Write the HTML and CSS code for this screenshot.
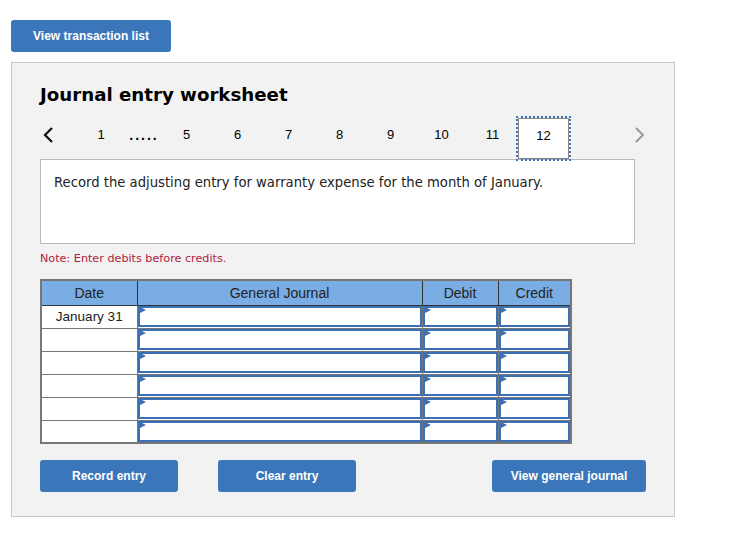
FILE: index.html
```html
<!DOCTYPE html>
<html>
  <head>
    <meta charset="utf-8">
    <title>Journal entry worksheet</title>
    <link rel="stylesheet" href="styles.css">
  </head>
  <body>
    <button class='btn top-btn'>View transaction list</button>

    <div id='panel'>
      <h1 class='title'>Journal entry worksheet</h1>

      <div id='pager'>
        <span class='arrow prev'>
          <svg width='12' height='18' viewBox='0 0 12 18'><path d='M10 2 L3 9 L10 16' fill='none' stroke='#111' stroke-width='2.2'/></svg>
        </span>
        <span class='page first'>1</span>
        <span class='dots'>.....</span>
        <span class='page'>5</span>
        <span class='page'>6</span>
        <span class='page'>7</span>
        <span class='page'>8</span>
        <span class='page'>9</span>
        <span class='page'>10</span>
        <span class='page'>11</span>
        <span class='page current'>12</span>
        <span class='arrow next'>
          <svg width='12' height='18' viewBox='0 0 12 18'><path d='M2 2 L9 9 L2 16' fill='none' stroke='#999' stroke-width='2'/></svg>
        </span>
      </div>

      <div class='question'>
        Record the adjusting entry for warranty expense for the month of January.
      </div>

      <p class='note'>Note: Enter debits before credits.</p>

      <table class='journal'>
        <tr>
          <th class='col-date'>Date</th>
          <th class='col-account'>General Journal</th>
          <th class='col-debit'>Debit</th>
          <th class='col-credit'>Credit</th>
        </tr>
        <tr>
          <td class='date'>January 31</td>
          <td class='entry'><div class='field'></div></td>
          <td class='entry'><div class='field'></div></td>
          <td class='entry'><div class='field'></div></td>
        </tr>
        <tr>
          <td class='date'></td>
          <td class='entry'><div class='field'></div></td>
          <td class='entry'><div class='field'></div></td>
          <td class='entry'><div class='field'></div></td>
        </tr>
        <tr>
          <td class='date'></td>
          <td class='entry'><div class='field'></div></td>
          <td class='entry'><div class='field'></div></td>
          <td class='entry'><div class='field'></div></td>
        </tr>
        <tr>
          <td class='date'></td>
          <td class='entry'><div class='field'></div></td>
          <td class='entry'><div class='field'></div></td>
          <td class='entry'><div class='field'></div></td>
        </tr>
        <tr>
          <td class='date'></td>
          <td class='entry'><div class='field'></div></td>
          <td class='entry'><div class='field'></div></td>
          <td class='entry'><div class='field'></div></td>
        </tr>
        <tr>
          <td class='date'></td>
          <td class='entry'><div class='field'></div></td>
          <td class='entry'><div class='field'></div></td>
          <td class='entry'><div class='field'></div></td>
        </tr>
      </table>

      <div class='actions'>
        <button class='btn'>Record entry</button>
        <button class='btn clear'>Clear entry</button>
        <button class='btn wide'>View general journal</button>
      </div>
    </div>
  </body>
</html>
```

FILE: styles.css
```css
* {
  margin: 0;
  padding: 0;
  box-sizing: border-box;
}
body {
  padding: 20px 0 0 11px;
  background-color: white;
  font-family: 'Liberation Sans', Arial, sans-serif;
  color: #222;
}
.btn {
  display: block;
  height: 32px;
  width: 138px;
  border: none;
  border-radius: 3px;
  background-color: #3b76bb;
  color: white;
  font-family: 'Liberation Sans', Arial, sans-serif;
  font-weight: bold;
  font-size: 12px;
}
.top-btn {
  width: 160px;
}
#panel {
  margin-top: 10px;
  width: 664px;
  height: 455px;
  padding: 21px 0 0 28px;
  background-color: #f2f2f2;
  border: 1px solid #c8c8c8;
}
.title {
  font-family: 'DejaVu Sans', Verdana, sans-serif;
  font-size: 18.2px;
  font-weight: bold;
  color: black;
  line-height: 22px;
}
#pager {
  display: flex;
  align-items: center;
  height: 43px;
  margin-top: 10px;
  font-size: 13px;
  color: black;
}
#pager span {
  display: flex;
  align-items: center;
  justify-content: center;
  height: 41px;
  padding-bottom: 6px;
}
.arrow {
  width: 14px;
}
.prev {
  margin-left: 1px;
  margin-right: 20px;
}
.next {
  margin-left: 64px;
}
.page {
  width: 51px;
}
.first {
  width: 52px;
}
.dots {
  width: 34px;
  font-weight: bold;
  font-size: 14px;
  letter-spacing: 2px;
}
.current {
  background-color: white;
  border: 1px solid #888;
  outline: 2px dotted #3b76bb;
  outline-offset: 0;
  width: 51px;
  margin-top: 2px;
}
.question {
  width: 595px;
  height: 85px;
  padding: 15px 13px;
  background-color: white;
  border: 1px solid #b9b9b9;
  font-family: 'DejaVu Sans', Verdana, sans-serif;
  font-size: 13.2px;
  color: #222;
}
.note {
  margin-top: 8px;
  font-family: 'DejaVu Sans', Verdana, sans-serif;
  font-size: 11.2px;
  color: #b01a3c;
}
.journal {
  margin-top: 14px;
  border-collapse: collapse;
  width: 532px;
  background-color: white;
  border: 2px solid #777;
  font-size: 13.5px;
}
.journal th {
  height: 25px;
  background-color: #79ade3;
  border: 1px solid #333;
  border-top: 2px solid #777;
  font-weight: normal;
  font-size: 14px;
  color: #222;
}
.col-date {
  width: 96px;
}
.col-account {
  width: 285px;
}
.col-debit {
  width: 76px;
}
.journal td {
  height: 23px;
  border: 1px solid #777;
  padding: 0;
}
.date {
  text-align: center;
}
.field {
  position: relative;
  height: 21px;
  border: 2px solid #3b70b4;
}
.field::before {
  content: '';
  position: absolute;
  top: -1px;
  left: 0;
  border-left: 6px solid #3b70b4;
  border-top: 3px solid transparent;
  border-bottom: 3px solid transparent;
}
.actions {
  display: flex;
  margin-top: 16px;
}
.clear {
  margin-left: 40px;
}
.wide {
  width: 154px;
  margin-left: 136px;
}
```
